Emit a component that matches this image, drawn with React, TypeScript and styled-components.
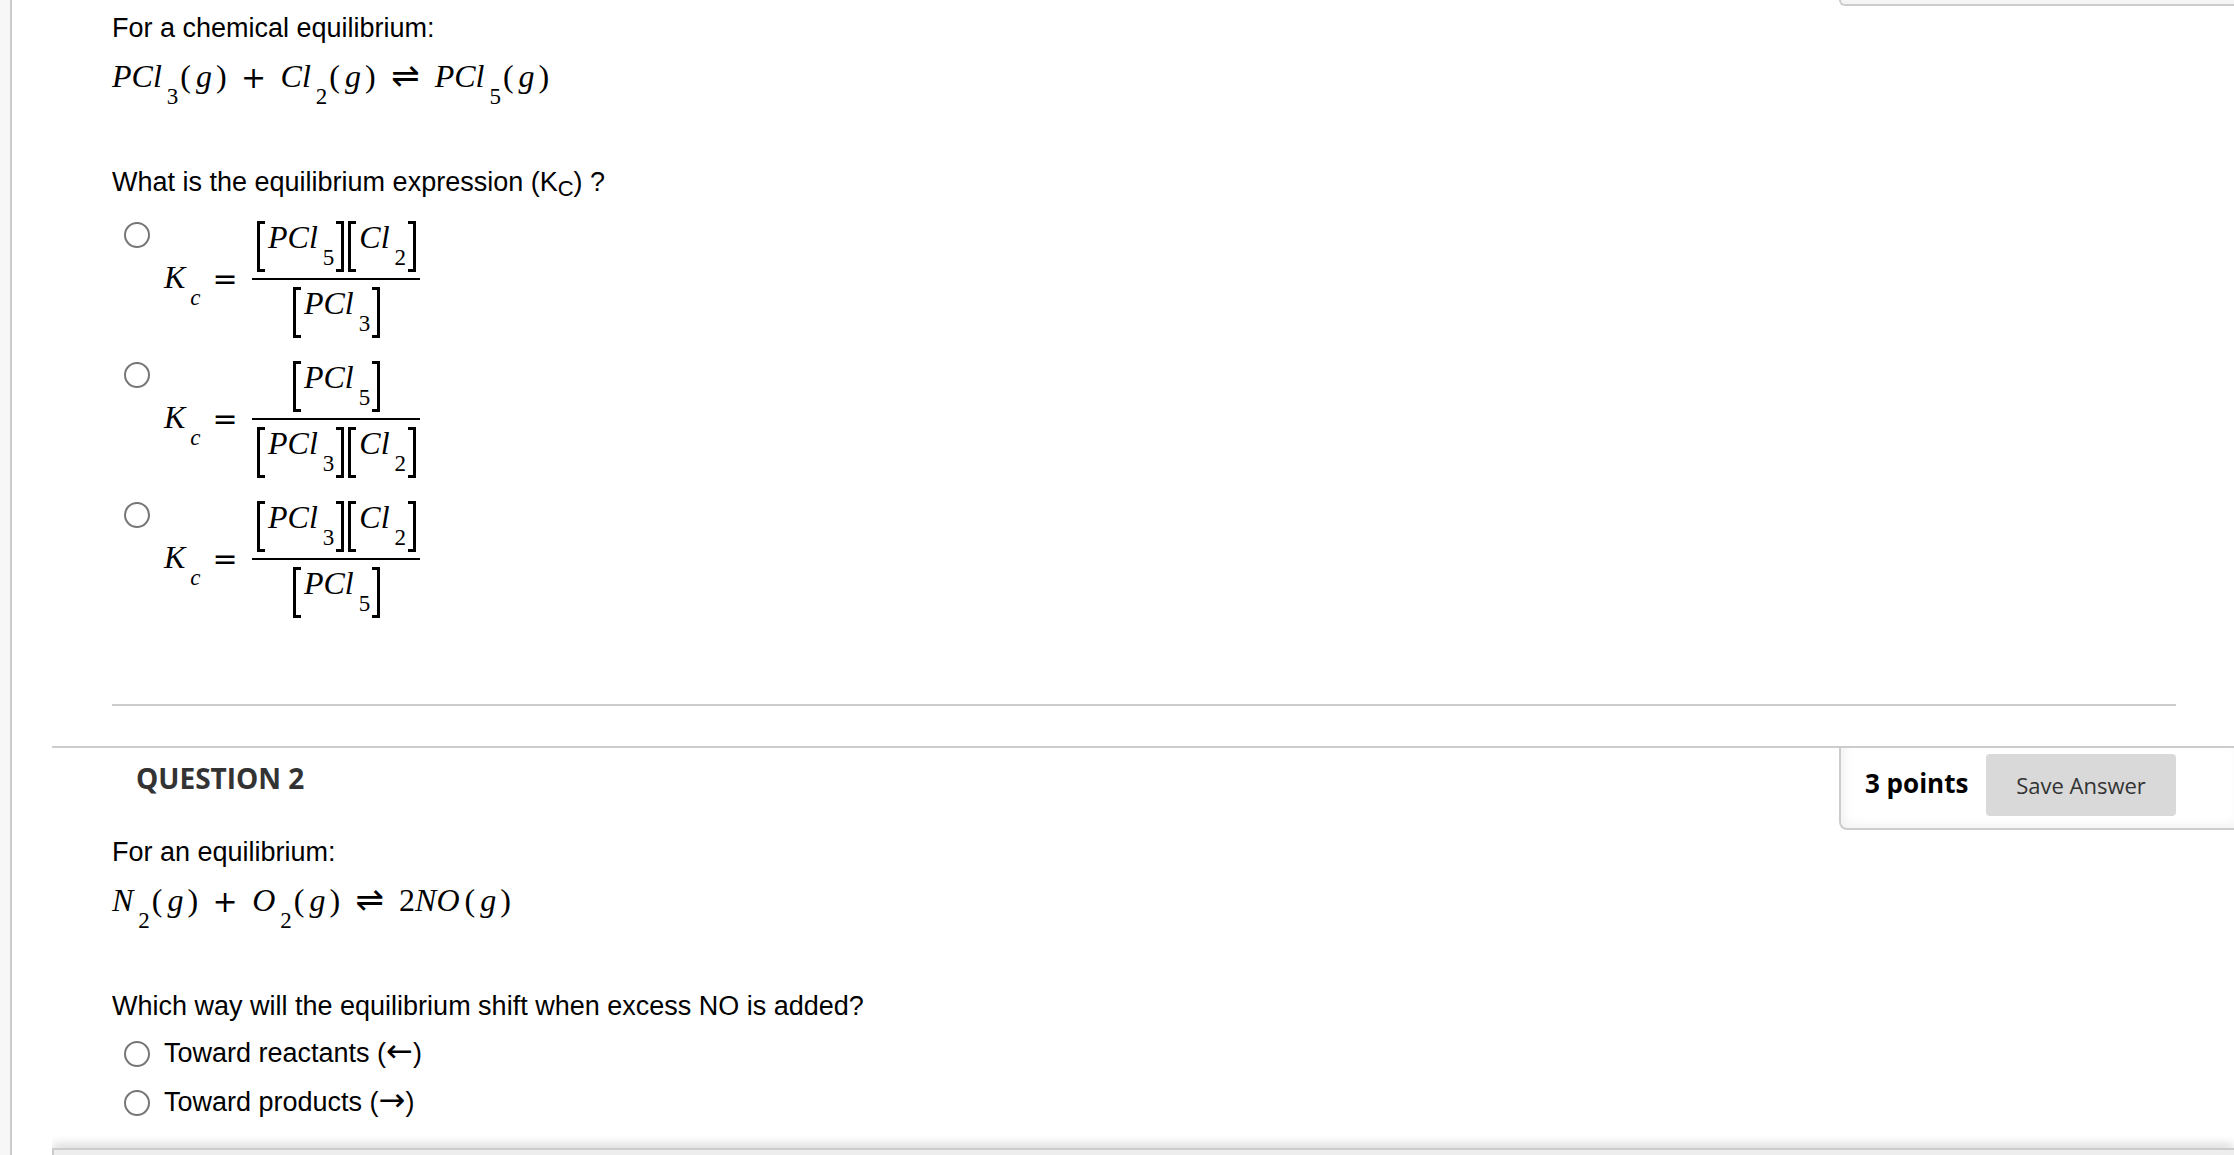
import React from "react";
import styled, { createGlobalStyle } from "styled-components";

const GlobalStyle = createGlobalStyle`
  *, *::before, *::after { box-sizing: border-box; }
  body {
    margin: 0;
    background: #fff;
    color: #000;
    font-family: "Liberation Sans", Arial, sans-serif;
    font-size: 27px;
  }
`;

const Shell = styled.div`
  display: flex;
  height: 100vh;
  overflow: hidden;
`;

const Rail = styled.aside`
  flex: none;
  width: 12px;
  background: #f7f7f7;
  border-right: 2px solid #ccc;
`;

const Main = styled.main`
  flex: 1;
  min-width: 0;
  display: flex;
  flex-direction: column;
  padding-left: 40px;
`;

const Questions = styled.div`
  flex: 1;
  min-height: 0;
  overflow: hidden;
`;

const Footer = styled.footer`
  flex: none;
  height: 7px;
  background: #ededed;
  border: 2px solid #ccc;
  border-width: 2px 0 0 2px;
  box-shadow: 0 -2px 12px 0 rgba(0, 0, 0, 0.24);
  clip-path: inset(-20px 0 0 0);
`;

const PointsBox = styled.div<{ $tail?: boolean }>`
  display: flex;
  align-items: flex-start;
  justify-content: space-between;
  width: 395px;
  height: ${(p) => (p.$tail ? 6 : 82)}px;
  margin-left: auto;
  padding: ${(p) => (p.$tail ? "0" : "6px 58px 0 24px")};
  border: 2px solid #ccc;
  border-width: 0 0 2px 2px;
  border-bottom-left-radius: 8px;
  box-shadow: inset 4px -4px 10px rgba(0, 0, 0, 0.05);
`;

const Points = styled.span`
  white-space: nowrap;
  font: 700 26px/58px "Open Sans", "Noto Sans", sans-serif;
`;

const SaveButton = styled.button`
  flex: none;
  width: 190px;
  height: 62px;
  padding: 0;
  border: 0;
  border-radius: 4px;
  background: #d9d9d9;
  color: #333;
  font: 400 22px/62px "Open Sans", "Noto Sans", sans-serif;
`;

const Header = styled.header`
  display: flex;
  align-items: flex-start;
  border-top: 2px solid #ccc;
`;

const Heading = styled.h2`
  margin: 0;
  padding-left: 84px;
  color: #333;
  font: 700 28px/60px "Open Sans", "Noto Sans", sans-serif;
`;

const Body = styled.div`
  padding: 2px 58px 0 60px;
`;

const Line = styled.p`
  margin: 0;
  line-height: 40px;

  sub {
    font-size: 22px;
    line-height: 0;
    vertical-align: -5px;
  }
`;

const Equation = styled.p`
  margin: 0 0 58px;
  font: 32px/56px "Liberation Serif", "Times New Roman", serif;
  white-space: nowrap;
`;

const Options = styled.fieldset<{ $top: number }>`
  margin: ${(p) => p.$top}px 0 0;
  padding: 0 0 0 12px;
  border: 0;
`;

const Option = styled.label<{ $tall?: boolean }>`
  display: flex;
  align-items: ${(p) => (p.$tall ? "flex-start" : "center")};
  gap: 14px;
  height: ${(p) => (p.$tall ? 140 : 49)}px;
`;

const Arrow = styled.span`
  font-family: "DejaVu Sans", sans-serif;
  font-size: 32px;
  line-height: 0;
`;

const Radio = styled.input`
  appearance: none;
  flex: none;
  width: 26px;
  height: 26px;
  margin: 1px 0 0;
  border: 2px solid #767676;
  border-radius: 50%;
  background: #fff;

  &:checked {
    background: radial-gradient(#0075ff 50%, #fff 55%);
  }
`;

const Divider = styled.hr`
  height: 2px;
  margin: 63px 0 40px;
  border: 0;
  background: #ccc;
`;

const Kc = styled.span`
  display: flex;
  align-items: center;
  font: 32px/40px "Liberation Serif", "Times New Roman", serif;
`;

const Lhs = styled.span`
  padding-bottom: 5px;
`;

const Var = styled.i``;

const Low = styled.sub<{ $italic?: boolean }>`
  margin: 0 2px 0 5px;
  font-size: 23px;
  font-style: ${(p) => (p.$italic ? "italic" : "normal")};
  line-height: 0;
  vertical-align: -17px;
`;

const Op = styled.span<{ $width: number }>`
  display: inline-block;
  width: ${(p) => p.$width}px;
  font-family: "DejaVu Sans", sans-serif;
  font-size: 30px;
  line-height: 0;
  text-align: center;
  vertical-align: -1px;
`;

const Harpoons = styled(Op)`
  font-size: 34px;
  vertical-align: baseline;
`;

const State = styled.span<{ $spaced?: boolean }>`
  margin-left: ${(p) => (p.$spaced ? 5 : 0)}px;

  i {
    margin: 0 4px 0 5px;
  }
`;

const Fraction = styled.span`
  display: flex;
  flex-direction: column;
  width: 168px;
  margin-left: 4px;
`;

const Part = styled.span`
  display: flex;
  justify-content: center;
  padding-left: 2px;

  & + & {
    margin-top: 6px;
    padding-top: 7px;
    border-top: 2px solid #000;
  }
`;

const Bracketed = styled.span`
  display: flex;
  height: 51px;
  margin: 0 2px;
  line-height: 33px;

  &::before,
  &::after {
    content: "";
    width: 8px;
    border: 3px solid #000;
  }
  &::before {
    border-right: 0;
    margin-right: 3px;
  }
  &::after {
    border-left: 0;
  }
`;

type Species = [name: string, count: number];

const PCl3: Species = ["PCl", 3];
const PCl5: Species = ["PCl", 5];
const Cl2: Species = ["Cl", 2];

const Formula = ({ of: [name, count] }: { of: Species }) => (
  <span>
    <Var>{name}</Var>
    <Low>{count}</Low>
  </span>
);

const Gas = ({ spaced }: { spaced?: boolean }) => (
  <State $spaced={spaced}>
    (<i>g</i>)
  </State>
);

const Product = ({ terms }: { terms: Species[] }) => (
  <Part>
    {terms.map((t) => (
      <Bracketed key={t.join("")}>
        <Formula of={t} />
      </Bracketed>
    ))}
  </Part>
);

const expressions: { over: Species[]; under: Species[] }[] = [
  { over: [PCl5, Cl2], under: [PCl3] },
  { over: [PCl5], under: [PCl3, Cl2] },
  { over: [PCl3, Cl2], under: [PCl5] },
];

export default function App() {
  return (
    <>
      <GlobalStyle />
      <Shell>
        <Rail />
        <Main>
          <Questions>
            <section>
              <PointsBox $tail />
              <Body>
                <Line>For a chemical equilibrium:</Line>
                <Equation>
                  <Formula of={PCl3} />
                  <Gas />
                  <Op $width={54}>+</Op>
                  <Formula of={Cl2} />
                  <Gas />
                  <Harpoons $width={59}>⇌</Harpoons>
                  <Formula of={PCl5} />
                  <Gas />
                </Equation>
                <Line>
                  What is the equilibrium expression (K<sub>C</sub>) ?
                </Line>
                <Options $top={19} aria-label="Equilibrium expression">
                  {expressions.map((e, i) => (
                    <Option key={i} $tall>
                      <Radio type="radio" name="q1" value={i} />
                      <Kc>
                        <Lhs>
                          <Var>K</Var>
                          <Low $italic>c</Low>
                          <Op $width={45}>=</Op>
                        </Lhs>
                        <Fraction>
                          <Product terms={e.over} />
                          <Product terms={e.under} />
                        </Fraction>
                      </Kc>
                    </Option>
                  ))}
                </Options>
                <Divider />
              </Body>
            </section>
            <section>
              <Header>
                <Heading>QUESTION 2</Heading>
                <PointsBox>
                  <Points>3 points</Points>
                  <SaveButton type="button">Save Answer</SaveButton>
                </PointsBox>
              </Header>
              <Body>
                <Line>For an equilibrium:</Line>
                <Equation>
                  <Formula of={["N", 2]} />
                  <Gas />
                  <Op $width={54}>+</Op>
                  <Formula of={["O", 2]} />
                  <Gas />
                  <Harpoons $width={59}>⇌</Harpoons>
                  2<Var>NO</Var>
                  <Gas spaced />
                </Equation>
                <Line>Which way will the equilibrium shift when excess NO is added?</Line>
                <Options $top={3} aria-label="Direction of shift">
                  <Option>
                    <Radio type="radio" name="q2" value="reactants" />
                    <span>
                      Toward reactants (<Arrow>←</Arrow>)
                    </span>
                  </Option>
                  <Option>
                    <Radio type="radio" name="q2" value="products" />
                    <span>
                      Toward products (<Arrow>→</Arrow>)
                    </span>
                  </Option>
                </Options>
              </Body>
            </section>
          </Questions>
          <Footer />
        </Main>
      </Shell>
    </>
  );
}
